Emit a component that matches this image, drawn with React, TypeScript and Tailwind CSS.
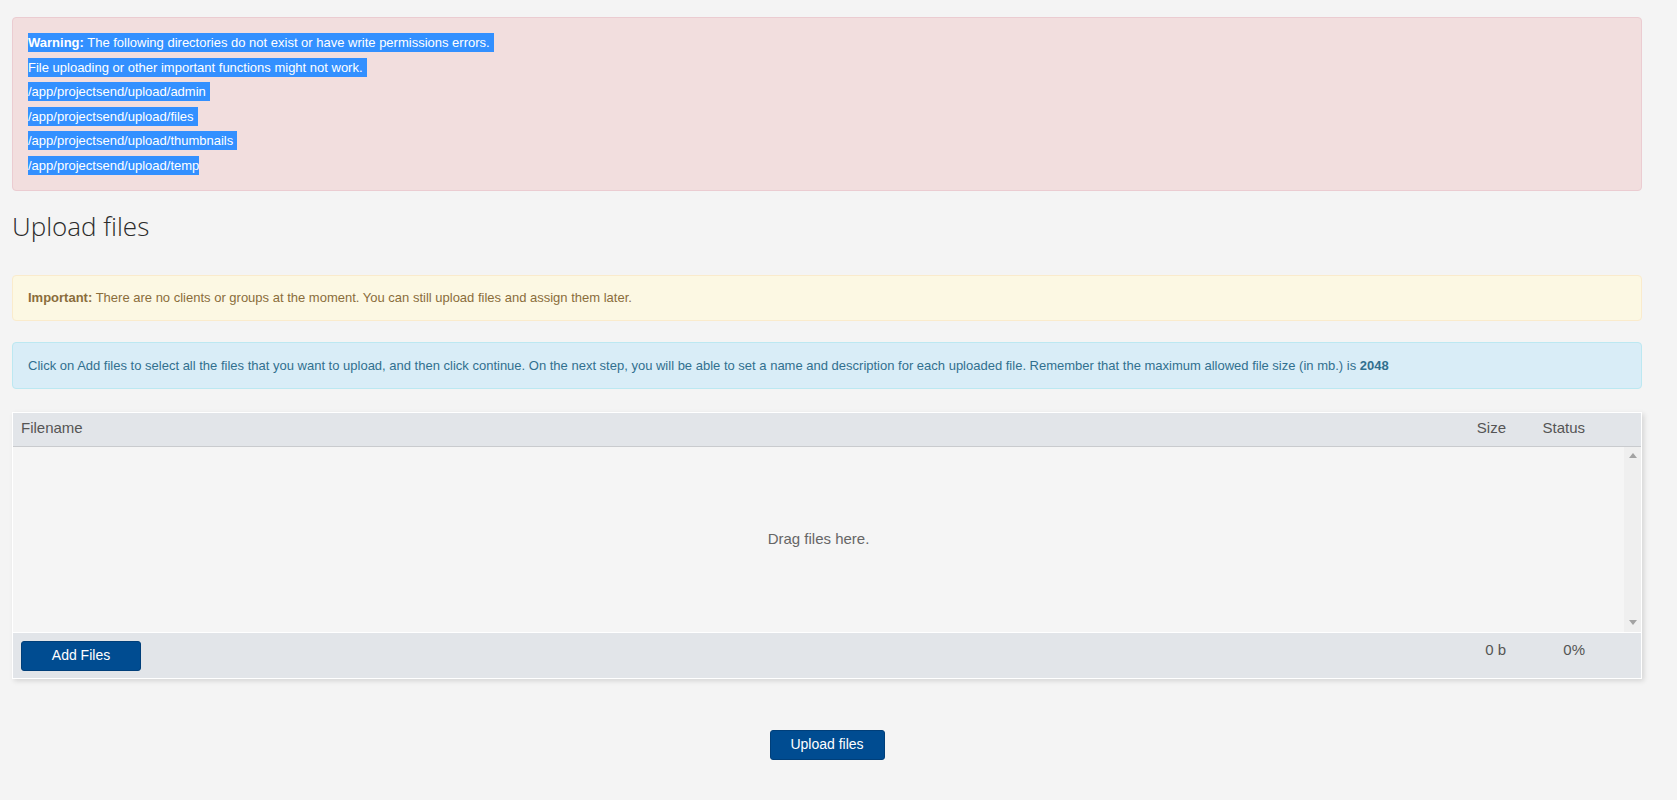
import React from "react";

const warnLines: { bold?: string; text: string; trail: boolean }[] = [
  { bold: "Warning:", text: " The following directories do not exist or have write permissions errors.", trail: true },
  { text: "File uploading or other important functions might not work.", trail: true },
  { text: "/app/projectsend/upload/admin", trail: true },
  { text: "/app/projectsend/upload/files", trail: true },
  { text: "/app/projectsend/upload/thumbnails", trail: true },
  { text: "/app/projectsend/upload/temp", trail: false },
];

export default function App() {
  return (
    <div
      className="min-h-screen w-full bg-[#f4f4f4]"
      style={{ fontFamily: '"Liberation Sans", Arial, sans-serif' }}
    >
      <div className="pl-[12px] pr-[35px] pt-[17px] pb-[40px]">
        {/* Danger alert */}
        <div className="rounded-[4px] border border-[#ebccd1] bg-[#f2dede] px-[15px] py-[15px] text-[13px]">
          <div className="flex flex-col items-start gap-[5.5px]">
            {warnLines.map((l, i) => (
              <div key={i} className="leading-[19px] h-[19px]">
                <span className={"bg-[#3390ff] text-white inline-block h-[19px] " + (l.trail ? "pr-[4px]" : "")}>
                  {l.bold && <b className="font-bold">{l.bold}</b>}
                  {l.text}
                </span>
              </div>
            ))}
          </div>
        </div>

        {/* Heading */}
        <h1
          className="mt-[16px] mb-[30px] text-[26px] leading-[38px] font-light text-[#2b2b2b]"
          style={{ fontFamily: '"Open Sans", "Liberation Sans", sans-serif' }}
        >
          Upload files
        </h1>

        {/* Important alert */}
        <div className="rounded-[4px] border border-[#faebcc] bg-[#fcf8e3] px-[15px] py-[12px] text-[13px] leading-[20px] text-[#8a6d3b]">
          <b className="font-bold">Important:</b> There are no clients or groups at the moment. You can still upload files and assign them later.
        </div>

        {/* Info alert */}
        <div className="mt-[21px] rounded-[4px] border border-[#bce8f1] bg-[#d9edf7] px-[15px] py-[12px] text-[13px] leading-[21px] text-[#31708f]">
          Click on Add files to select all the files that you want to upload, and then click continue. On the next step, you will be able to set a name and description for each uploaded file. Remember that the maximum allowed file size (in mb.) is <b className="font-bold">2048</b>
        </div>

        {/* Uploader table */}
        <div className="mt-[23px] border border-white bg-[#f5f5f5] shadow-[2px_2px_5px_rgba(0,0,0,0.13)] text-[15px] text-[#555]">
          <div className="flex h-[34px] border-b border-[#c9cbce] bg-[#e2e5e9] pl-[8px] pr-[56px] pt-[6px] leading-[18px]">
            <div className="flex-1">Filename</div>
            <div className="w-[80px] text-right">Size</div>
            <div className="w-[79px] text-right">Status</div>
          </div>
          <div className="flex h-[185px]">
            <div className="flex flex-1 items-center justify-center text-[#666]">Drag files here.</div>
            <div className="flex w-[17px] flex-col items-center justify-between bg-[#efefef] pt-[6px] pb-[7px]">
              <svg width="8" height="5" viewBox="0 0 8 5">
                <polygon points="4,0 8,5 0,5" fill="#a3a3a3" />
              </svg>
              <svg width="8" height="5" viewBox="0 0 8 5">
                <polygon points="0,0 8,0 4,5" fill="#a3a3a3" />
              </svg>
            </div>
          </div>
          <div className="flex h-[46px] items-start border-t border-white bg-[#e2e5e9] pl-[8px] pr-[56px] pt-[8px]">
            <div className="flex-1">
              <button className="h-[30px] w-[120px] rounded-[3px] border border-[#003f7a] bg-[#004c91] text-[14px] text-white">
                Add Files
              </button>
            </div>
            <div className="w-[80px] text-right leading-[18px]">0 b</div>
            <div className="w-[79px] text-right leading-[18px]">0%</div>
          </div>
        </div>

        {/* Upload button */}
        <div className="mt-[51px] flex justify-center">
          <button className="h-[30px] w-[115px] rounded-[3px] border border-[#003f7a] bg-[#004c91] text-[14px] text-white">
            Upload files
          </button>
        </div>
      </div>
    </div>
  );
}
